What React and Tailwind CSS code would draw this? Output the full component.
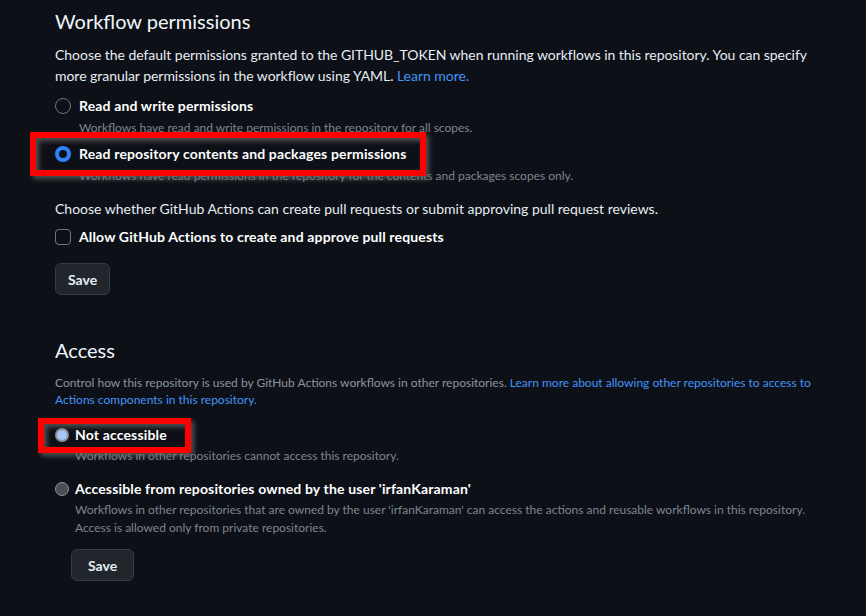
import React from "react";

const font = { fontFamily: 'Lato, "Noto Sans", "Liberation Sans", sans-serif' };

export default function App() {
  return (
    <div className="relative min-h-[616px] w-[866px] bg-[#0d1117] text-[#e6edf3] pl-[55px] pt-[6px] whitespace-nowrap" style={font}>

      {/* Workflow permissions */}
      <h2 className="text-[20px] leading-[30px] font-normal text-[#f0f6fc]">Workflow permissions</h2>
      <p className="mt-2 text-[14px] leading-[21px] tracking-[-0.04px]">
        Choose the default permissions granted to the GITHUB_TOKEN when running workflows in this repository. You can specify
        <br />
        more granular permissions in the workflow using YAML. <a className="text-[#4493f8]">Learn more.</a>
      </p>

      <RadioRow mt="mt-[9px]" label="Read and write permissions" radio={<EmptyRadio />} />
      <Desc indent="pl-[24px]" mt="mt-[3px]">Workflows have read and write permissions in the repository for all scopes.</Desc>

      <RadioRow mt="mt-[6px]" label="Read repository contents and packages permissions" radio={<BlueRadio />} />
      <Desc indent="pl-[24px]" mt="mt-[3px]">Workflows have read permissions in the repository for the contents and packages scopes only.</Desc>

      {/* annotation box drawn over the second option */}
      <Highlight className="top-[132px] left-[30px] w-[396px] h-[44px]" />

      <p className="mt-[13px] text-[14px] leading-[21px]">
        Choose whether GitHub Actions can create pull requests or submit approving pull request reviews.
      </p>
      <div className="mt-[7px] flex items-center gap-2 h-[21px]">
        <span className="w-4 h-4 rounded-[4px] border border-[#6e7681]" />
        <span className="text-[14px] font-bold text-white tracking-[0.15px]">Allow GitHub Actions to create and approve pull requests</span>
      </div>

      <button className="mt-[16px] h-8 px-[12px] rounded-md bg-[#21262d] border border-[#363b42] text-[14px] font-bold text-[#e6edf3]">
        Save
      </button>

      {/* Access */}
      <h2 className="mt-[40px] text-[20px] leading-[30px] font-normal text-[#f0f6fc]">Access</h2>
      <p className="mt-[9px] text-[12px] leading-[17px] text-[#8b949e]">
        Control how this repository is used by GitHub Actions workflows in other repositories.{" "}
        <a className="text-[#4493f8]">
          Learn more about allowing other repositories to access to
          <br />
          Actions components in this repository.
        </a>
      </p>

      <div className="mt-[16px] flex items-center gap-[6px] h-[21px]">
        <span className="w-[14px] h-[14px] rounded-full border-2 border-[#8b949e] bg-[#a5c8f8]" />
        <span className="text-[14px] font-bold text-white tracking-[0.15px]">Not accessible</span>
      </div>
      <Desc indent="pl-[20px]" mt="mt-[2px]">Workflows in other repositories cannot access this repository.</Desc>

      <Highlight className="top-[418px] left-[38px] w-[153px] h-[35px]" />

      <div className="mt-[13px] flex items-center gap-[6px] h-[21px]">
        <span className="w-[14px] h-[14px] rounded-full border border-[#8b949e] bg-[#484f58]" />
        <span className="text-[14px] font-bold text-white tracking-[0.15px]">Accessible from repositories owned by the user 'irfanKaraman'</span>
      </div>
      <Desc indent="pl-[20px]" mt="mt-[2px]">
        Workflows in other repositories that are owned by the user 'irfanKaraman' can access the actions and reusable workflows in this repository.
        <br />
        Access is allowed only from private repositories.
      </Desc>

      <div className="pl-[16px]">
        <button className="mt-[12px] h-8 px-[16px] rounded-md bg-[#21262d] border border-[#363b42] text-[14px] font-bold text-[#e6edf3]">
          Save
        </button>
      </div>
    </div>
  );
}

function RadioRow({ label, radio, mt = "" }) {
  return (
    <div className={`${mt} flex items-center gap-2 h-[21px]`}>
      {radio}
      <span className="text-[14px] font-bold text-white tracking-[0.15px]">{label}</span>
    </div>
  );
}

function EmptyRadio() {
  return <span className="w-4 h-4 rounded-full border border-[#6e7681]" />;
}

function BlueRadio() {
  return <span className="w-4 h-4 rounded-full border-[4px] border-[#2f81f7] bg-[#0d1117]" />;
}

function Desc({ children, indent, mt }) {
  return <p className={`${mt} ${indent} text-[12px] leading-[18px] text-[#7d8590]`}>{children}</p>;
}

function Highlight({ className }) {
  return (
    <span
      className={`absolute border-[6px] border-[#ff0000] shadow-[3px_3px_5px_rgba(110,110,110,0.7),inset_3px_3px_5px_rgba(110,110,110,0.7)] ${className}`}
    />
  );
}
